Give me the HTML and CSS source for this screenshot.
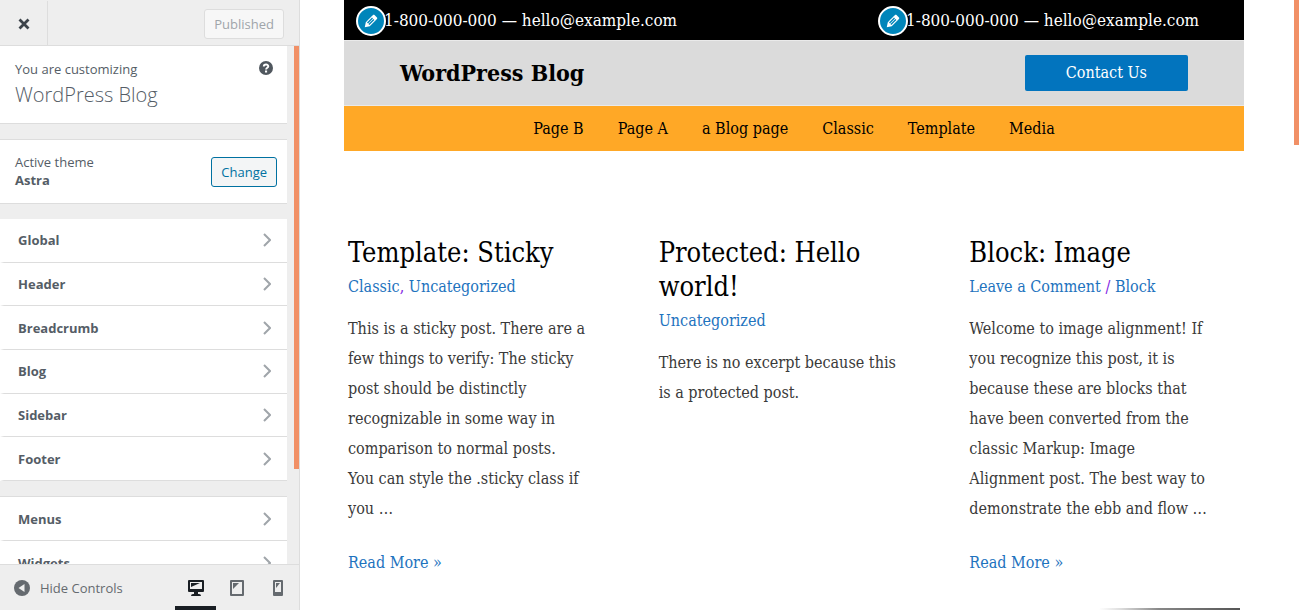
FILE: index.html
```html
<!DOCTYPE html>
<html lang="en">
  <head>
    <meta charset="UTF-8" />
    <meta name="viewport" content="width=device-width, initial-scale=1.0" />
    <title>Customize: WordPress Blog</title>
    <link rel="stylesheet" href="styles.css">
  </head>
  <body>
    <svg class="sprite" width="0" height="0" aria-hidden="true">
      <symbol id="chevron" viewBox="0 0 8 14">
        <path d="M1 1l6 6-6 6" fill="none" stroke="#a0a5aa" stroke-width="2" />
      </symbol>
      <symbol id="pencil" viewBox="0 0 20 20">
        <path fill="#fff" d="M13.89 3.39l2.71 2.72c.46.46.42 1.24.03 1.64l-8.01 8.02-5.56 1.16 1.16-5.58s7.6-7.63 7.99-8.03c.39-.39 1.22-.39 1.68.07zm-2.73 2.79l-5.59 5.61 1.11 1.11 5.54-5.65zm-2.97 8.23l5.58-5.6-1.07-1.08-5.59 5.6z" />
      </symbol>
    </svg>

    <aside class="sidebar">
      <header class="sidebar-header">
        <button class="close" aria-label="Close">
          <svg width="12" height="12" viewBox="0 0 12 12"><path d="M1.500 1.500l9 9M10.500 1.500l-9 9" stroke="#3c434a" stroke-width="2.800" /></svg>
        </button>
        <button class="btn published" disabled>Published</button>
      </header>

      <div class="sidebar-content">
        <section class="panel info">
          <div>
            <p>You are customizing</p>
            <p class="site-name">WordPress Blog</p>
          </div>
          <button class="help" aria-label="Help">
            <svg width="14" height="14" viewBox="0 0 14 14">
              <circle cx="7" cy="7" r="7" fill="#50575e" />
              <path d="M4.800 5.400C4.800 3 9.300 2.900 9.300 5.300C9.300 6.900 7.100 6.700 7.100 8.500" fill="none" stroke="#fff" stroke-width="1.900" />
              <rect x="6" y="9.500" width="2.100" height="2" fill="#fff" />
            </svg>
          </button>
        </section>

        <section class="panel theme">
          <div>
            <p>Active theme</p>
            <p class="theme-name">Astra</p>
          </div>
          <button class="btn change">Change</button>
        </section>

        <div class="sections">
          <button class="row">Global <svg width="8" height="14"><use href="#chevron" /></svg></button>
          <button class="row">Header <svg width="8" height="14"><use href="#chevron" /></svg></button>
          <button class="row">Breadcrumb <svg width="8" height="14"><use href="#chevron" /></svg></button>
          <button class="row">Blog <svg width="8" height="14"><use href="#chevron" /></svg></button>
          <button class="row">Sidebar <svg width="8" height="14"><use href="#chevron" /></svg></button>
          <button class="row">Footer <svg width="8" height="14"><use href="#chevron" /></svg></button>
        </div>

        <div class="sections more">
          <button class="row">Menus <svg width="8" height="14"><use href="#chevron" /></svg></button>
          <button class="row">Widgets <svg width="8" height="14"><use href="#chevron" /></svg></button>
        </div>
        <div class="scroll-thumb"></div>
      </div>

      <footer class="sidebar-footer">
        <button class="collapse">
          <svg width="16" height="16" viewBox="0 0 16 16">
            <circle cx="8" cy="8" r="8" fill="#656a6f" />
            <path d="M10.500 4v8L4.500 8z" fill="#eee" />
          </svg>
          Hide Controls
        </button>
        <div class="devices">
          <button class="device active" aria-label="Desktop">
            <svg width="16" height="16" viewBox="0 0 16 16">
              <path fill="#191e23" fill-rule="evenodd" d="M1 0h14q1 0 1 1v10q0 1-1 1h-5v2h1q2 0 2 2H3q0-2 2-2h1v-2H1q-1 0-1-1V1q0-1 1-1zm1 2v7h12V2z" />
              <path fill="#191e23" d="M3 3h9L3 7z" />
            </svg>
          </button>
          <button class="device" aria-label="Tablet">
            <svg width="14" height="16" viewBox="0 0 14 16">
              <path fill="#656a6f" fill-rule="evenodd" d="M1 0h12q1 0 1 1v14q0 1-1 1H1q-1 0-1-1V1q0-1 1-1zm1 2v12h10V2z" />
              <path fill="#656a6f" d="M3 3h6L3 9z" />
            </svg>
          </button>
          <button class="device" aria-label="Mobile">
            <svg width="10" height="16" viewBox="0 0 10 16">
              <path fill="#656a6f" fill-rule="evenodd" d="M1 0h8q1 0 1 1v14q0 1-1 1H1q-1 0-1-1V1q0-1 1-1zm1 2v10h6V2z" />
              <path fill="#656a6f" d="M3 3h4L3 8z" />
            </svg>
          </button>
        </div>
      </footer>
    </aside>

    <main class="preview">
      <header class="site-header">
        <div class="top-bar">
          <div class="contact">
            <button class="edit" aria-label="Edit"><svg width="18" height="18"><use href="#pencil" /></svg></button>
            1-800-000-000 — hello@example.com
          </div>
          <div class="contact">
            <button class="edit" aria-label="Edit"><svg width="18" height="18"><use href="#pencil" /></svg></button>
            1-800-000-000 — hello@example.com
          </div>
        </div>
        <div class="brand-bar">
          <a class="brand" href="#">WordPress Blog</a>
          <a class="contact-btn" href="#">Contact Us</a>
        </div>
        <nav class="menu">
          <a href="#">Page B</a>
          <a href="#">Page A</a>
          <a href="#">a Blog page</a>
          <a href="#">Classic</a>
          <a href="#">Template</a>
          <a href="#">Media</a>
        </nav>
      </header>

      <div class="posts">
        <article class="post">
          <h2>Template: Sticky</h2>
          <p class="meta"><a href="#">Classic</a>, <a href="#">Uncategorized</a></p>
          <p class="excerpt">This is a sticky post. There are a few things to verify: The sticky post should be distinctly recognizable in some way in comparison to normal posts. You&nbsp;can style the .sticky class if you&nbsp;…</p>
          <a class="read-more" href="#">Read More »</a>
        </article>
        <article class="post">
          <h2>Protected: Hello world!</h2>
          <p class="meta"><a href="#">Uncategorized</a></p>
          <p class="excerpt">There is no excerpt because this is a protected post.</p>
        </article>
        <article class="post">
          <h2>Block: Image</h2>
          <p class="meta"><a href="#">Leave a Comment</a> / <a href="#">Block</a></p>
          <p class="excerpt">Welcome to image alignment! If you recognize this post, it is because these are blocks that have been converted from the classic Markup: Image Alignment post. The best way to demonstrate the ebb and flow …</p>
          <a class="read-more" href="#">Read More »</a>
        </article>
        <div class="thumbnail"></div>
      </div>
      <div class="scroll-thumb page-thumb"></div>
    </main>
  </body>
</html>
```

FILE: styles.css
```css
* {
  box-sizing: border-box;
}
body {
  margin: 0;
  height: 100vh;
  display: flex;
  overflow: hidden;
  background: #fff;
}
p,
h2 {
  margin: 0;
}
a {
  text-decoration: none;
}
button {
  font: inherit;
  color: inherit;
  background: none;
  border: none;
  padding: 0;
  cursor: pointer;
}
svg {
  display: block;
}
.sprite {
  position: absolute;
}

/* customizer sidebar */
.sidebar {
  width: 300px;
  flex: none;
  display: flex;
  flex-direction: column;
  background: #eee;
  border-right: 1px solid #ddd;
  font-family: "Open Sans", sans-serif;
  font-size: 13px;
  line-height: 18px;
  color: #555d66;
}
.sidebar-header {
  display: flex;
  justify-content: space-between;
  align-items: center;
  height: 46px;
  padding: 2px 15px 0 0;
  border-bottom: 1px solid #ddd;
}
.close {
  width: 48px;
  height: 45px;
  display: grid;
  place-items: center;
  border-right: 1px solid #ddd;
}
.btn {
  height: 30px;
  padding: 0 9px;
  border: 1px solid #ddd;
  border-radius: 3px;
  background: #f7f7f7;
}
.published {
  color: #a0a5aa;
}
.change {
  color: #0071a1;
  border-color: #0071a1;
  background: #f3f5f6;
}
.sidebar-content {
  flex: 1;
  min-height: 0;
  overflow: hidden;
  position: relative;
  padding-right: 12px;
}
.panel {
  display: flex;
  justify-content: space-between;
  background: #fff;
  border-bottom: 1px solid #ddd;
  margin-bottom: 15px;
}
.info {
  height: 78px;
  padding: 14px 14px 0 15px;
}
.site-name {
  font-size: 20px;
  font-weight: 300;
  line-height: 34px;
}
.help {
  align-self: flex-start;
  padding-top: 1px;
}
.theme {
  height: 65px;
  align-items: center;
  padding: 0 10px 0 15px;
  border-top: 1px solid #ddd;
}
.theme-name {
  font-weight: 700;
  padding-bottom: 2px;
}
.sections {
  display: grid;
  grid-auto-rows: 1fr;
  height: 262px;
  margin-bottom: 15px;
}
.more {
  height: 89px;
  border-top: 1px solid #ddd;
}
.row {
  display: flex;
  justify-content: space-between;
  align-items: center;
  padding: 0 16px 0 14px;
  background: #fff;
  border-bottom: 1px solid #ddd;
  border-left: 4px solid #fff;
  font-weight: 700;
}
.scroll-thumb {
  position: absolute;
  top: 0;
  right: 0;
  width: 5px;
  height: 423px;
  background: #f19066;
}
.sidebar-footer {
  display: flex;
  justify-content: space-between;
  height: 46px;
  padding-right: 1px;
  border-top: 1px solid #ddd;
  color: #656a6f;
}
.collapse {
  display: flex;
  align-items: center;
  gap: 10px;
  padding-left: 14px;
}
.devices {
  display: flex;
}
.device {
  width: 41px;
  display: grid;
  place-items: center;
}
.device.active {
  box-shadow: inset 0 -4px #191e23;
}

/* site preview */
.preview {
  flex: 1;
  min-width: 0;
  position: relative;
  overflow: hidden;
  padding: 0 55px 0 44px;
  font-family: "DejaVu Serif Condensed", "DejaVu Serif", serif;
  font-size: 16px;
  line-height: 30px;
  color: #3a3a3a;
}
.top-bar {
  display: flex;
  justify-content: space-between;
  align-items: center;
  height: 41px;
  padding: 0 40px;
  background: #000;
  border-bottom: 1px solid #eaeaea;
  font-size: 17px;
  color: #fff;
}
.contact {
  position: relative;
  min-width: 298px;
}
.edit {
  position: absolute;
  top: 1px;
  left: -28px;
  width: 30px;
  height: 30px;
  display: grid;
  place-items: center;
  border: 2px solid #fff;
  border-radius: 50%;
  background: #0085ba;
}
.brand-bar {
  display: flex;
  justify-content: space-between;
  align-items: center;
  height: 65px;
  padding: 0 56px;
  background: #dbdbdb;
  border-bottom: 1px solid #eaeaea;
}
.brand {
  font-size: 23px;
  font-weight: 700;
  color: #000;
}
.contact-btn {
  padding: 3px 41px;
  border-radius: 2px;
  background: #0274be;
  color: #fff;
}
.menu {
  display: flex;
  justify-content: center;
  gap: 34px;
  height: 45px;
  line-height: 46px;
  background: #ffa826;
}
.menu a {
  color: #000;
}
.posts {
  display: grid;
  grid-template-columns: repeat(3, 1fr);
  column-gap: 40px;
  padding: 85px 4px 0;
}
.post {
  padding-right: 28px;
}
.post h2 {
  font-size: 27px;
  font-weight: 400;
  line-height: 34px;
  color: #000;
}
.meta {
  line-height: 34px;
  color: #8224e3;
}
.meta a,
.read-more {
  color: #1e73be;
}
.excerpt {
  margin: 10px 0 24px;
}
.thumbnail {
  grid-column: 3;
  height: 180px;
  margin-top: 30px;
  background: linear-gradient(90deg, #fff 48%, #ddd 56%, #888 70%, #555 100%);
}
.page-thumb {
  height: 145px;
}
```
